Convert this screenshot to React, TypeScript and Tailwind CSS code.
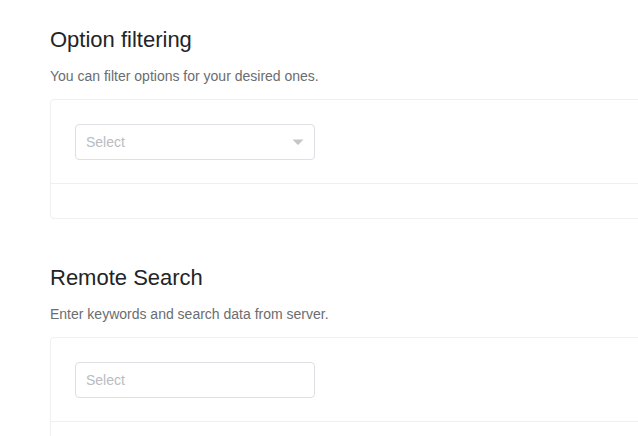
import React from 'react';

const SECTIONS = [
  {
    title: 'Option filtering',
    description: 'You can filter options for your desired ones.',
    arrow: true,
  },
  {
    title: 'Remote Search',
    description: 'Enter keywords and search data from server.',
    arrow: false,
  },
];

function CaretDown() {
  return (
    <svg width="12" height="6" viewBox="0 0 12 6" aria-hidden="true">
      <path d="M0.5 0.5 L11.5 0.5 L6.6 5.4 Q6 6 5.4 5.4 Z" fill="#c4c6c9" />
    </svg>
  );
}

function SelectBox({ arrow }: { arrow: boolean }) {
  return (
    <div className="flex items-center justify-between w-[240px] h-[36px] rounded-[4px] border border-[#dcdfe3] bg-white pl-[10px] pr-[10px]">
      <span className="text-[14px] leading-[20px] text-[#b9bcc0]">Select</span>
      {arrow && <CaretDown />}
    </div>
  );
}

function DemoSection({
  title,
  description,
  arrow,
  first,
}: {
  title: string;
  description: string;
  arrow: boolean;
  first: boolean;
}) {
  return (
    <section className={first ? '' : 'mt-[45px]'}>
      <h3 className="text-[22px] leading-[28px] font-normal text-[#222426]">{title}</h3>
      <p className="mt-[12px] text-[14px] leading-[21px] text-[#6a6d70]">{description}</p>
      {/* demo block */}
      <div className="mt-[12px] w-[600px] rounded-[4px] border border-[#f0f0f0]">
        <div className="pt-[24px] pb-[23px] pl-[24px] border-b border-[#efefef]">
          <SelectBox arrow={arrow} />
        </div>
        <div className="h-[34px]" />
      </div>
    </section>
  );
}

export default function App() {
  return (
    <div
      className="w-[638px] h-[436px] overflow-hidden bg-white pl-[50px] pt-[26px]"
      style={{ fontFamily: '"Liberation Sans", Arial, sans-serif' }}
    >
      {SECTIONS.map((s, i) => (
        <DemoSection
          key={s.title}
          title={s.title}
          description={s.description}
          arrow={s.arrow}
          first={i === 0}
        />
      ))}
    </div>
  );
}
